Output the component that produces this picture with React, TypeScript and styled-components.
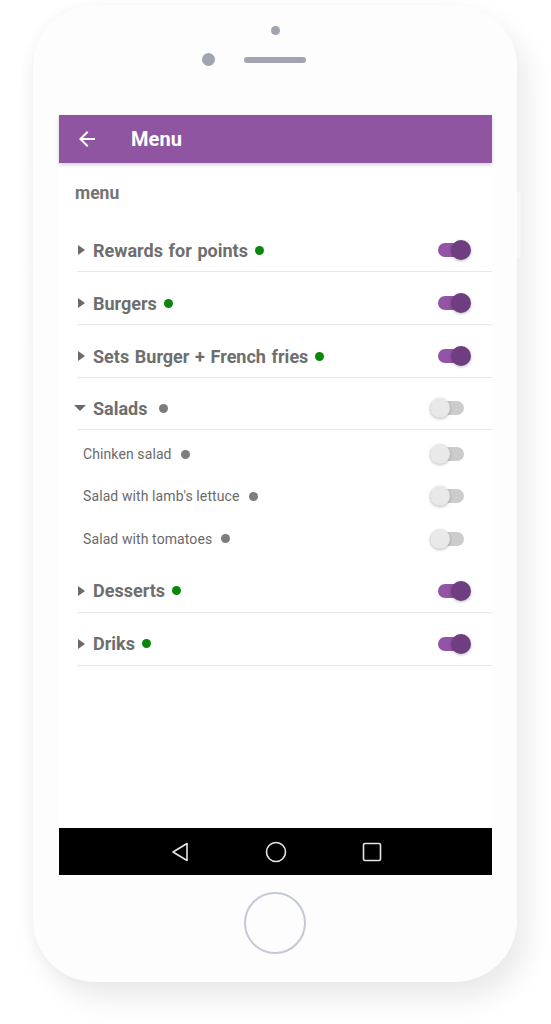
import React from "react";
import styled, { createGlobalStyle } from "styled-components";

const Global = createGlobalStyle`
  html, body { margin: 0; padding: 0; background: #ffffff; }
  body { font-family: Roboto, "Noto Sans", "Liberation Sans", sans-serif; }
  * { box-sizing: border-box; }
`;

const Page = styled.div`
  width: 551px;
  height: 1024px;
  padding: 5px 0 0 33px;
  overflow: hidden;
`;

const Phone = styled.div`
  position: relative;
  width: 484px;
  height: 977px;
  border-radius: 62px;
  background: #fdfdfd;
  box-shadow: -6px 0 10px rgba(0, 0, 0, 0.025), 10px 16px 28px rgba(0, 0, 0, 0.085);
  display: flex;
  flex-direction: column;
`;

const SideButton = styled.div<{ $side: "left" | "right"; $top: number; $h: number }>`
  position: absolute;
  top: ${(p) => p.$top}px;
  ${(p) => (p.$side === "left" ? "left: -4px;" : "right: -4px;")}
  width: 4px;
  height: ${(p) => p.$h}px;
  background: #f6f6f6;
  border-radius: 2px;
`;

const TopBezel = styled.div`
  height: 110px;
  padding-top: 21px;
  display: flex;
  flex-direction: column;
  align-items: center;
`;

const Camera = styled.div`
  width: 9px;
  height: 9px;
  border-radius: 50%;
  background: #a1a4b2;
`;

const SpeakerRow = styled.div`
  margin-top: 18px;
  width: 100%;
  display: grid;
  grid-template-columns: 1fr auto 1fr;
  align-items: center;
`;

const SensorDot = styled.div`
  justify-self: end;
  margin-right: 29px;
  width: 13px;
  height: 13px;
  border-radius: 50%;
  background: #a1a4b2;
`;

const Speaker = styled.div`
  width: 62px;
  height: 6px;
  border-radius: 3px;
  background: #a1a4b2;
`;

const Screen = styled.div`
  margin-left: 26px;
  width: 433px;
  height: 760px;
  display: flex;
  flex-direction: column;
  background: #ffffff;
`;

const AppBar = styled.div`
  height: 48px;
  background: #8f55a0;
  display: flex;
  align-items: center;
  padding-left: 16px;
  gap: 32px;
  box-shadow: 0 2px 4px rgba(0, 0, 0, 0.18);
  position: relative;
  z-index: 1;
`;

const Title = styled.div`
  color: #ffffff;
  font-size: 20px;
  font-weight: 700;
  letter-spacing: 0.1px;
`;

const Content = styled.div`
  flex: 1;
  display: flex;
  flex-direction: column;
`;

const SectionLabel = styled.div`
  padding: 20px 0 16px 16px;
  line-height: 20px;
  font-size: 17.5px;
  font-weight: 700;
  color: #747474;
`;

const List = styled.div`
  margin-left: 18px;
  display: flex;
  flex-direction: column;
`;

const CategoryRow = styled.div<{ $open?: boolean }>`
  height: ${(p) => (p.$open ? 52 : 53)}px;
  padding-top: ${(p) => (p.$open ? 9 : 10)}px;
  border-bottom: 1px solid #e8e8e8;
  display: flex;
  align-items: center;
  padding-right: 21px;
`;

const CaretBox = styled.div`
  width: 12px;
  margin-left: -3px;
  margin-right: 7px;
  display: flex;
  justify-content: center;
  align-items: center;
`;

const Caret = styled.div<{ $open?: boolean }>`
  width: 0;
  height: 0;
  ${(p) =>
    p.$open
      ? `border-left: 6px solid transparent; border-right: 6px solid transparent; border-top: 6px solid #6a6a6a;`
      : `border-top: 5px solid transparent; border-bottom: 5px solid transparent; border-left: 7px solid #6a6a6a; margin-left: 2px;`}
`;

const CategoryName = styled.span`
  font-size: 18px;
  font-weight: 700;
  color: #6e6e6e;
  word-spacing: 1.2px;
`;

const Dot = styled.span<{ $color: string; $size: number; $gap: number }>`
  display: inline-block;
  width: ${(p) => p.$size}px;
  height: ${(p) => p.$size}px;
  border-radius: 50%;
  background: ${(p) => p.$color};
  margin-left: ${(p) => p.$gap}px;
`;

const Spacer = styled.div`
  flex: 1;
`;

const SubList = styled.div`
  padding-top: 3px;
  display: flex;
  flex-direction: column;
`;

const SubRow = styled.div`
  height: 42.33px;
  display: flex;
  align-items: center;
  padding-left: 6px;
  padding-right: 21px;
`;

const SubName = styled.span`
  font-size: 14px;
  color: #6a6a6a;
  letter-spacing: 0.1px;
`;

const SwitchBox = styled.div`
  position: relative;
  width: 41px;
  height: 20px;
  flex-shrink: 0;
`;

const Track = styled.div<{ $on: boolean }>`
  position: absolute;
  top: 3px;
  height: 14px;
  border-radius: 7px;
  left: ${(p) => (p.$on ? 8 : 0)}px;
  width: ${(p) => (p.$on ? 30 : 34)}px;
  background: ${(p) => (p.$on ? "#9254a5" : "#cccccc")};
`;

const Thumb = styled.div<{ $on: boolean }>`
  position: absolute;
  top: 0;
  ${(p) => (p.$on ? "right: 0;" : "left: 0;")}
  width: 20px;
  height: 20px;
  border-radius: 50%;
  background: ${(p) => (p.$on ? "#6f3e80" : "#e9e9e9")};
  box-shadow: 0 1px 3px rgba(0, 0, 0, 0.28);
`;

const NavBar = styled.div`
  height: 47px;
  background: #000000;
  display: flex;
  justify-content: center;
  align-items: center;
  gap: 72px;
  padding-left: 1px;
`;

const NavIcon = styled.svg`
  width: 24px;
  height: 24px;
  display: block;
`;

const BottomBezel = styled.div`
  flex: 1;
  display: flex;
  justify-content: center;
  padding-top: 17px;
`;

const HomeButton = styled.div`
  width: 62px;
  height: 62px;
  border-radius: 50%;
  border: 2.5px solid #c4c9d5;
`;

const Switch = ({ on }: { on: boolean }) => (
  <SwitchBox>
    <Track $on={on} />
    <Thumb $on={on} />
  </SwitchBox>
);

type Cat = { name: string; on: boolean; open?: boolean; subs?: string[] };

const categories: Cat[] = [
  { name: "Rewards for points", on: true },
  { name: "Burgers", on: true },
  { name: "Sets Burger + French fries", on: true },
  {
    name: "Salads",
    on: false,
    open: true,
    subs: ["Chinken salad", "Salad with lamb's lettuce", "Salad with tomatoes"],
  },
  { name: "Desserts", on: true },
  { name: "Driks", on: true },
];

export default function App() {
  return (
    <Page>
      <Global />
      <Phone>
        <SideButton $side="left" $top={117} $h={40} />
        <SideButton $side="left" $top={192} $h={66} />
        <SideButton $side="left" $top={272} $h={66} />
        <SideButton $side="right" $top={187} $h={66} />
        <TopBezel>
          <Camera />
          <SpeakerRow>
            <SensorDot />
            <Speaker />
            <div />
          </SpeakerRow>
        </TopBezel>
        <Screen>
          <AppBar>
            <NavIcon viewBox="0 0 24 24">
              <path
                fill="#ffffff"
                d="M20 11H7.83l5.59-5.59L12 4l-8 8 8 8 1.41-1.41L7.83 13H20v-2z"
              />
            </NavIcon>
            <Title>Menu</Title>
          </AppBar>
          <Content>
            <SectionLabel>menu</SectionLabel>
            <List>
              {categories.map((c) => (
                <React.Fragment key={c.name}>
                  <CategoryRow $open={c.open}>
                    <CaretBox>
                      <Caret $open={c.open} />
                    </CaretBox>
                    <CategoryName>{c.name}</CategoryName>
                    <Dot $color={c.on ? "#0a870a" : "#7d7d7d"} $size={9} $gap={c.open ? 11 : 7} />
                    <Spacer />
                    <Switch on={c.on} />
                  </CategoryRow>
                  {c.subs && (
                    <SubList>
                      {c.subs.map((s) => (
                        <SubRow key={s}>
                          <SubName>{s}</SubName>
                          <Dot $color="#7d7d7d" $size={9} $gap={9} />
                          <Spacer />
                          <Switch on={false} />
                        </SubRow>
                      ))}
                    </SubList>
                  )}
                </React.Fragment>
              ))}
            </List>
          </Content>
          <NavBar>
            <NavIcon viewBox="0 0 24 24">
              <path
                d="M19 3.5 L19 20.5 L5 12 Z"
                fill="none"
                stroke="#e6e6e6"
                strokeWidth="1.6"
                strokeLinejoin="round"
              />
            </NavIcon>
            <NavIcon viewBox="0 0 24 24">
              <circle cx="12" cy="12" r="9.5" fill="none" stroke="#e6e6e6" strokeWidth="1.6" />
            </NavIcon>
            <NavIcon viewBox="0 0 24 24">
              <rect
                x="3.5"
                y="3.5"
                width="17"
                height="17"
                rx="1.5"
                fill="none"
                stroke="#e6e6e6"
                strokeWidth="1.6"
              />
            </NavIcon>
          </NavBar>
        </Screen>
        <BottomBezel>
          <HomeButton />
        </BottomBezel>
      </Phone>
    </Page>
  );
}
